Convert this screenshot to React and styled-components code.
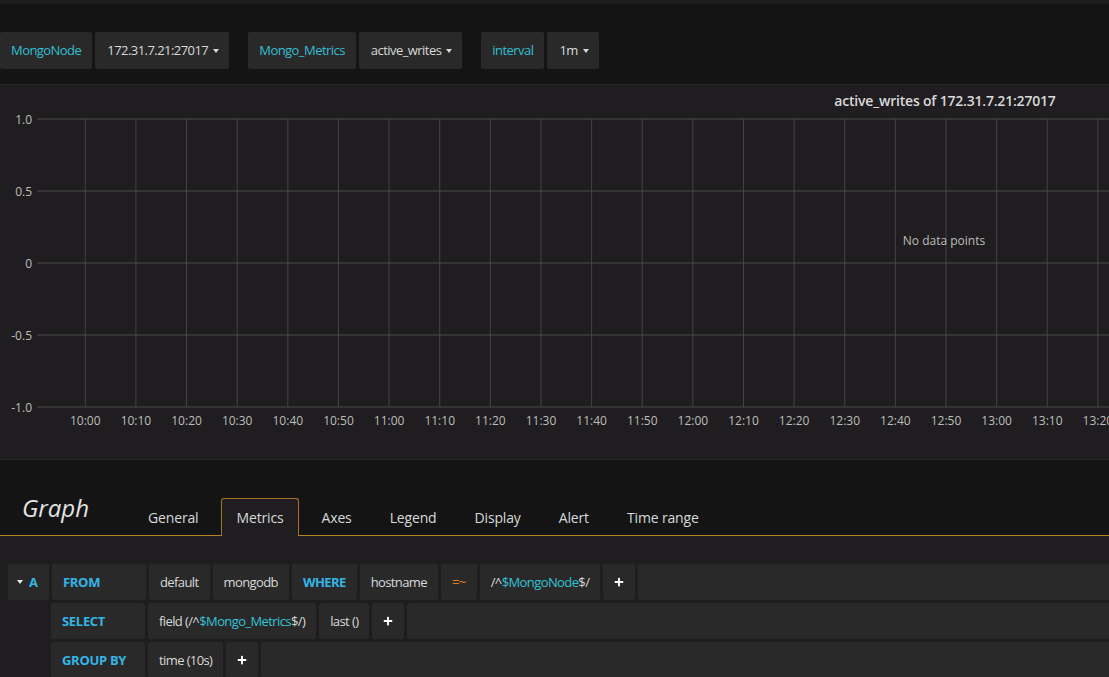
import React from 'react'
import styled, { createGlobalStyle } from 'styled-components'
import { FaPlus } from 'react-icons/fa'

const GlobalStyle = createGlobalStyle`
  html, body {
    margin: 0;
    padding: 0;
    background: #141414;
    overflow: hidden;
  }
  body {
    font-family: "Open Sans", "DejaVu Sans", sans-serif;
    color: #d8d9da;
  }
`

const variables = [
  { name: 'MongoNode', value: '172.31.7.21:27017' },
  { name: 'Mongo_Metrics', value: 'active_writes' },
  { name: 'interval', value: '1m' },
]

const tabs = ['General', 'Metrics', 'Axes', 'Legend', 'Display', 'Alert', 'Time range']

const yTicks = [
  { label: '1.0', y: 3 },
  { label: '0.5', y: 75 },
  { label: '0', y: 147 },
  { label: '-0.5', y: 219 },
  { label: '-1.0', y: 291 },
]

const xTicks = []
for (let i = 0; i < 35; i++) {
  const mins = 600 + i * 10
  const h = Math.floor(mins / 60)
  const m = mins % 60
  xTicks.push({ label: `${h}:${m === 0 ? '00' : m}`, x: 85.3 + i * 50.63 })
}

const Chart = () => (
  <ChartSvg width="1890" height="343">
    {xTicks.map(t => (
      <line key={'v' + t.label} x1={t.x} x2={t.x} y1={3} y2={291} stroke="#444" strokeWidth="1" />
    ))}
    {yTicks.map(t => (
      <g key={t.label}>
        <line x1={37} x2={1851} y1={t.y} y2={t.y} stroke="#4c4c4c" strokeWidth="1" />
        <AxisText x={32} y={t.y + 4.5} textAnchor="end">{t.label}</AxisText>
      </g>
    ))}
    {xTicks.map(t => (
      <AxisText key={'l' + t.label} x={t.x} y={308.5} textAnchor="middle">{t.label}</AxisText>
    ))}
    <AxisText x={944} y={128.5} textAnchor="middle">No data points</AxisText>
  </ChartSvg>
)

const Segment = ({ children, kind }) => <Seg kind={kind}>{children}</Seg>

const App = () => (
  <Page>
    <GlobalStyle />
    <TopStrip />
    <Submenu>
      {variables.map(v => (
        <VarGroup key={v.name}>
          <VarLabel>{v.name}</VarLabel>
          <VarValue>{v.value}<Caret /></VarValue>
        </VarGroup>
      ))}
    </Submenu>

    <Panel>
      <PanelTitle>active_writes of 172.31.7.21:27017</PanelTitle>
      <Chart />
    </Panel>

    <EditorHeader>
      <EditorTitle>Graph</EditorTitle>
      <Tabs>
        {tabs.map(t => (
          <Tab key={t} active={t === 'Metrics'}>{t}</Tab>
        ))}
      </Tabs>
    </EditorHeader>

    <EditorBody>
      <QueryRow>
        <RefId><Caret /><RefLetter>A</RefLetter></RefId>
        <Keyword>FROM</Keyword>
        <Segment>default</Segment>
        <Segment>mongodb</Segment>
        <Segment kind="keyword">WHERE</Segment>
        <Segment>hostname</Segment>
        <Segment kind="operator">=~</Segment>
        <Segment>/^<Var>$MongoNode</Var>$/</Segment>
        <Segment kind="plus"><FaPlus size={10} /></Segment>
        <Filler />
      </QueryRow>
      <QueryRow>
        <RefSpacer />
        <Keyword>SELECT</Keyword>
        <Segment>field (/^<Var>$Mongo_Metrics</Var>$/)</Segment>
        <Segment>last ()</Segment>
        <Segment kind="plus"><FaPlus size={10} /></Segment>
        <Filler />
      </QueryRow>
      <QueryRow>
        <RefSpacer />
        <Keyword>GROUP BY</Keyword>
        <Segment>time (10s)</Segment>
        <Segment kind="plus"><FaPlus size={10} /></Segment>
        <Filler />
      </QueryRow>
    </EditorBody>
  </Page>
)

const Page = styled.div`
  width: 1109px;
  height: 677px;
  overflow: hidden;
  display: flex;
  flex-direction: column;
`
const TopStrip = styled.div`
  height: 4px;
  background: #1d1d1d;
  flex-shrink: 0;
`
const Submenu = styled.div`
  display: flex;
  gap: 19px;
  padding: 28px 0 15px 0;
  flex-shrink: 0;
`
const VarGroup = styled.div`
  display: flex;
  gap: 3px;
`
const VarLabel = styled.div`
  height: 37px;
  line-height: 37px;
  padding: 0 11px 0 11px;
  background: #292929;
  border-radius: 2px;
  color: #33bfd3;
  font-size: 13px;
  letter-spacing: -0.55px;
`
const VarValue = styled(VarLabel)`
  color: #d8d9da;
  padding: 0 10px 0 12px;
  display: flex;
  align-items: center;
`
const Caret = styled.span`
  display: inline-block;
  width: 0;
  height: 0;
  margin-left: 5px;
  border-left: 3px solid transparent;
  border-right: 3px solid transparent;
  border-top: 4px solid #d8d9da;
`
const Panel = styled.div`
  width: 1890px;
  height: 376px;
  background: #1f1d1f;
  border-top: 1px solid #262626;
  border-bottom: 1px solid #262626;
  box-sizing: border-box;
  display: flex;
  flex-direction: column;
  flex-shrink: 0;
`
const PanelTitle = styled.div`
  height: 31px;
  line-height: 31px;
  text-align: center;
  font-size: 14px;
  font-weight: 600;
  letter-spacing: -0.2px;
  color: #d8d9da;
`
const ChartSvg = styled.svg`
  display: block;
  overflow: visible;
`
const AxisText = styled.text`
  font-family: "Open Sans", sans-serif;
  font-size: 12px;
  fill: #bdbdbd;
`
const EditorHeader = styled.div`
  height: 76px;
  box-sizing: border-box;
  display: flex;
  align-items: flex-end;
  padding-left: 22px;
  border-bottom: 1px solid #b3841f;
  background: #141414;
  flex-shrink: 0;
`
const EditorTitle = styled.div`
  width: 111px;
  font-size: 24px;
  line-height: 24px;
  font-style: italic;
  color: #e3e3e3;
  margin-bottom: 15px;
`
const Tabs = styled.div`
  display: flex;
  gap: 8px;
`
const Tab = styled.div`
  height: 38px;
  line-height: 37px;
  padding: 0 14px;
  font-size: 14px;
  letter-spacing: -0.15px;
  color: #d8d9da;
  box-sizing: border-box;
  border: 1px solid ${p => (p.active ? '#a8722b' : 'transparent')};
  border-bottom: none;
  border-radius: 3px 3px 0 0;
  background: ${p => (p.active ? '#1f1d1f' : 'transparent')};
  margin-bottom: -1px;
`
const EditorBody = styled.div`
  flex: 1;
  background: #1f1d1f;
  padding: 28px 0 0 8px;
  display: flex;
  flex-direction: column;
  gap: 3px;
`
const QueryRow = styled.div`
  display: flex;
  gap: 3px;
  height: 36px;
  flex-shrink: 0;
`
const RefId = styled.div`
  width: 41px;
  box-sizing: border-box;
  background: #292929;
  display: flex;
  align-items: center;
  padding-left: 9px;
  font-size: 13px;
  font-weight: 700;
  border-radius: 2px;

  span:first-child {
    margin-left: 0;
    border-top-color: #e8e8e8;
  }
`
const RefLetter = styled.span`
  color: #33b5e5;
  margin-left: 6px;
`
const RefSpacer = styled.div`
  width: 40px;
`
const Keyword = styled.div`
  width: 94px;
  box-sizing: border-box;
  padding-left: 11px;
  background: #292929;
  line-height: 36px;
  font-size: 13px;
  font-weight: 700;
  letter-spacing: -0.3px;
  color: #33b5e5;
  border-radius: 2px;
`
const Seg = styled.div`
  display: flex;
  align-items: center;
  padding: 0 11px;
  background: #292929;
  border-radius: 2px;
  font-size: 13px;
  letter-spacing: -0.6px;
  white-space: pre;
  color: ${p => (p.kind === 'keyword' ? '#33b5e5' : p.kind === 'operator' ? '#eb7b18' : p.kind === 'plus' ? '#ffffff' : '#d8d9da')};
  font-weight: ${p => (p.kind === 'keyword' ? 700 : 400)};
`
const Var = styled.span`
  color: #33c3d6;
`
const Filler = styled.div`
  flex: 1;
  background: #292929;
  border-radius: 2px 0 0 2px;
`

export default App
